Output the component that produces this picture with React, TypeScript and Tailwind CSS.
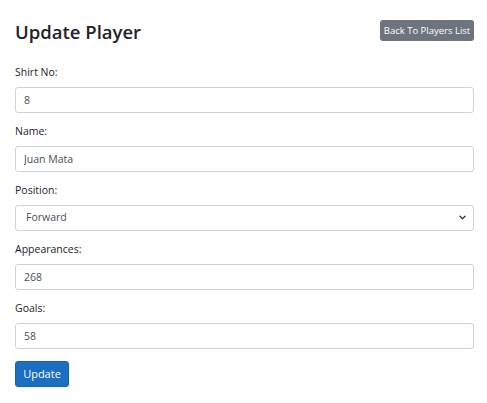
import React from "react";

const inputCls =
  "block w-full h-[26px] rounded-[3px] border border-[#ced4da] bg-white px-[8px] text-[10.5px] text-[#495057] outline-none";

function Field({ label, value }: { label: string; value: string }) {
  return (
    <div className="mb-[10px]">
      <label className="block h-[16px] leading-[16px] text-[10.5px] text-[#212529] mb-[7px]">{label}</label>
      <input className={inputCls} defaultValue={value} />
    </div>
  );
}

export default function App() {
  return (
    <div
      className="w-[487px] h-[403px] bg-white pl-[15px] pr-[13px] pt-[16px]"
      style={{ fontFamily: '"Open Sans", "Noto Sans", sans-serif' }}
    >
      <div className="flex items-start justify-between h-[48px]">
        <h1 className="text-[18.5px] leading-[28px] font-semibold text-[#212529] mt-[2px]">Update Player</h1>
        <button className="mt-[4px] h-[21px] w-[94px] rounded-[3px] bg-[#6c757d] text-white text-[9.5px] leading-[21px]">
          Back To Players List
        </button>
      </div>
      <Field label="Shirt No:" value="8" />
      <Field label="Name:" value="Juan Mata" />
      <div className="mb-[10px]">
        <label className="block h-[16px] leading-[16px] text-[10.5px] text-[#212529] mb-[7px]">Position:</label>
        <div className="relative">
          <select className={inputCls + " appearance-none pl-[10px]"} defaultValue="Forward">
            <option>Forward</option>
            <option>Midfielder</option>
            <option>Defender</option>
            <option>Goalkeeper</option>
          </select>
          <svg
            className="absolute right-[8px] top-[10px] pointer-events-none"
            width="7"
            height="5"
            viewBox="0 0 8 6"
          >
            <path d="M1 1.5 L4 4.5 L7 1.5" fill="none" stroke="#343a40" strokeWidth="1.6" strokeLinecap="round" strokeLinejoin="round" />
          </svg>
        </div>
      </div>
      <Field label="Appearances:" value="268" />
      <Field label="Goals:" value="58" />
      <button className="mt-[2px] h-[26px] w-[54px] rounded-[3px] bg-[#1b6ec2] border border-[#1861ac] text-white text-[11px]">
        Update
      </button>
    </div>
  );
}
